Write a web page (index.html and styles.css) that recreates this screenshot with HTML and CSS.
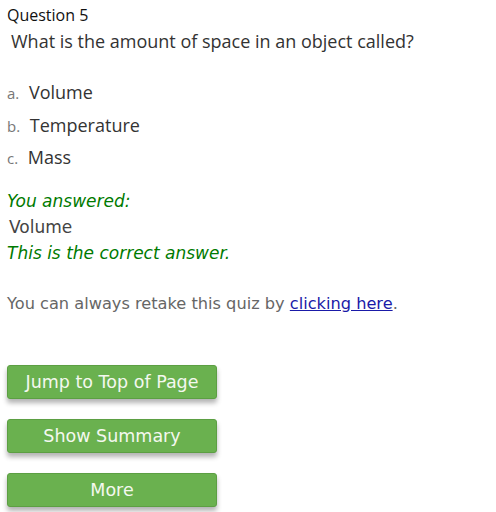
FILE: index.html
```html
<!DOCTYPE html>
<html>
<head>
  <link rel="stylesheet" href="styles.css">
</head>
<body>
  <div class="quiz">
    <div class="q-num">Question 5</div>
    <div class="q-text">What is the amount of space in an object called?</div>
    <ol class="choices">
      <li><span class="letter">a.</span> Volume</li>
      <li><span class="letter">b.</span> Temperature</li>
      <li><span class="letter">c.</span> Mass</li>
    </ol>
    <div class="result">
      <div class="green">You answered:</div>
      <div class="given">Volume</div>
      <div class="green">This is the correct answer.</div>
    </div>
    <p class="retake">You can always retake this quiz by <a href="#">clicking here</a>.</p>
    <div class="buttons">
      <a href="#" class="btn">Jump to Top of Page</a>
      <a href="#" class="btn">Show Summary</a>
      <a href="#" class="btn">More</a>
    </div>
  </div>
</body>
</html>
```
FILE: styles.css
```css
body { margin: 0; background: #fff; }
.quiz { padding: 5px 7px; }
.q-num { font-family: "Open Sans", sans-serif; font-size: 16px; color: #111; line-height: 20px; }
.q-text { font-family: "Open Sans", sans-serif; font-size: 18px; color: #333; line-height: 24px; margin: 4px 0 0 4px; }
.choices { list-style: none; margin: 27px 0 0; padding: 0; font-family: "Open Sans", sans-serif; font-size: 18px; color: #333; }
.choices li { line-height: 24px; margin-bottom: 8px; }
.choices li:nth-child(2) { margin-bottom: 7px; }
.letter { color: #777; font-size: 15px; margin-right: 5px; }
.result { margin-top: 18px; font-family: "DejaVu Sans", Verdana, sans-serif; font-size: 17px; line-height: 26px; }
.green { color: #007a00; font-style: italic; }
.given { color: #444; padding-left: 2px; }
.retake { font-family: "DejaVu Sans", Verdana, sans-serif; font-size: 16.2px; color: #666; margin: 25px 0 0; line-height: 26px; }
.retake a { color: #1a1aa8; }
.buttons { margin-top: 48px; display: flex; flex-direction: column; gap: 20px; }
.btn { display: block; width: 208px; height: 32px; line-height: 32px; text-align: center; background: #6ab14f; border: 1px solid #5c9f43; color: #f4f8ef; border-radius: 3px; text-decoration: none; font-family: "DejaVu Sans", Verdana, sans-serif; font-size: 17.5px; box-shadow: 0 4px 5px rgba(0,0,0,0.3); }
```
